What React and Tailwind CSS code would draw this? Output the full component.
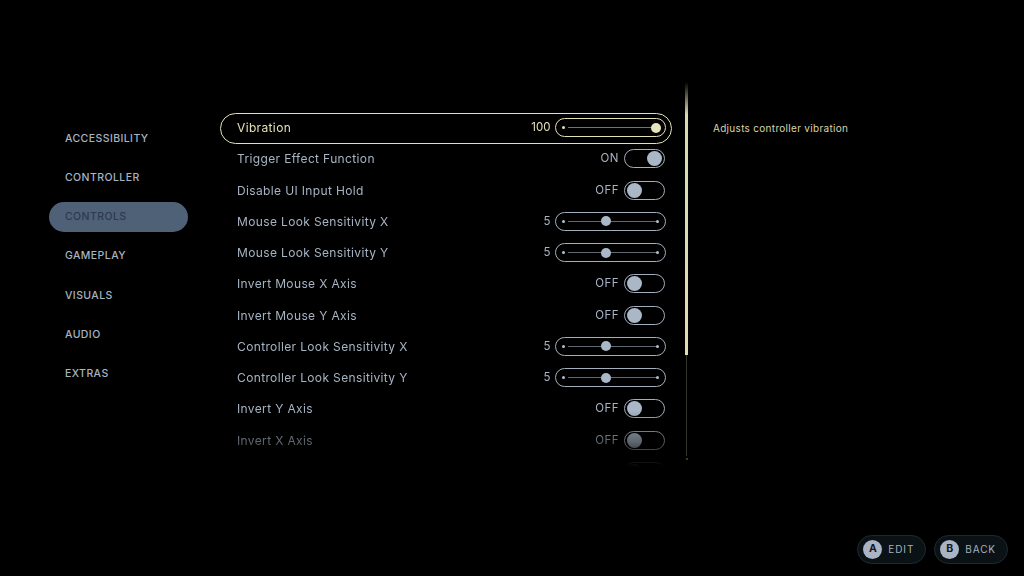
import React from 'react'

const TABS = ['ACCESSIBILITY', 'CONTROLLER', 'CONTROLS', 'GAMEPLAY', 'VISUALS', 'AUDIO', 'EXTRAS']

const ROWS = [
  { label: 'Vibration', type: 'slider', value: 100, active: true },
  { label: 'Trigger Effect Function', type: 'toggle', on: true },
  { label: 'Disable UI Input Hold', type: 'toggle', on: false },
  { label: 'Mouse Look Sensitivity X', type: 'slider', value: 5 },
  { label: 'Mouse Look Sensitivity Y', type: 'slider', value: 5 },
  { label: 'Invert Mouse X Axis', type: 'toggle', on: false },
  { label: 'Invert Mouse Y Axis', type: 'toggle', on: false },
  { label: 'Controller Look Sensitivity X', type: 'slider', value: 5 },
  { label: 'Controller Look Sensitivity Y', type: 'slider', value: 5 },
  { label: 'Invert Y Axis', type: 'toggle', on: false },
  { label: 'Invert X Axis', type: 'toggle', on: false },
  // only the top of this toggle shows through the fade
  { label: '', type: 'toggle', on: false },
]

function Slider({ value, active }) {
  // 5 sits in the middle of the track, 100 at the far end
  const left = value === 100 ? 95 : 45
  return (
    <div className="mb-[1px] flex items-center gap-[4px]">
      <span className={`text-[11.5px] ${active ? 'text-[#e4e0b6]' : 'text-[#a7b4c3]'}`}>{value}</span>
      <div className={`relative h-[19px] w-[111px] rounded-full border ${active ? 'border-[#e4e0b6]' : 'border-[#a3afbd]'}`}>
        <div className={`absolute left-[12px] right-[8px] top-[8px] h-px ${active ? 'bg-[#77765f]' : 'bg-[#5f6873]'}`} />
        <div className={`absolute left-[6px] top-[7px] h-[3px] w-[3px] rounded-full ${active ? 'bg-[#e4e0b6]' : 'bg-[#b4bfcc]'}`} />
        <div className={`absolute right-[6px] top-[7px] h-[3px] w-[3px] rounded-full ${active ? 'bg-[#e4e0b6]' : 'bg-[#b4bfcc]'}`} />
        <div
          className={`absolute top-[3.5px] h-[10px] w-[10px] rounded-full ${active ? 'bg-[#e8e4bb]' : 'bg-[#a9b7c7]'}`}
          style={{ left: `${left}px` }}
        />
      </div>
    </div>
  )
}

function Toggle({ on, showState }) {
  return (
    <div className="mb-[1px] mr-[0.5px] flex items-center gap-[5px]">
      {showState && <span className="text-[11.5px] tracking-[0.04em] text-[#a7b4c3]">{on ? 'ON' : 'OFF'}</span>}
      <div className={`flex h-[19px] w-[41px] items-center rounded-full border border-[#a3afbd] px-[2px] ${on ? 'justify-end' : 'justify-start'}`}>
        <div className="h-[15px] w-[15px] rounded-full bg-[#a9b7c7]" />
      </div>
    </div>
  )
}

function SettingRow({ row }) {
  return (
    <div
      className={`flex h-[31.25px] shrink-0 items-center justify-between rounded-full border pl-[16px] pr-[5.5px] ${
        row.active ? 'border-[#e4e0b6]' : 'border-transparent'
      }`}
    >
      <span className={`text-[12px] tracking-[0.03em] ${row.active ? 'text-[#e4e0b6]' : 'text-[#a7b4c3]'}`}>{row.label}</span>
      {row.type === 'slider' ? <Slider value={row.value} active={row.active} /> : <Toggle on={row.on} showState={row.label !== ''} />}
    </div>
  )
}

function Hint({ button, label }) {
  return (
    <div className="flex h-[29px] items-center gap-[6px] rounded-full border border-[#1d2931] bg-[#0b1216] pl-[5.5px] pr-[10.5px]">
      <div className="flex h-[19px] w-[19px] items-center justify-center rounded-full bg-[#a9b4c4] text-[10.5px] font-bold text-[#10161c]">
        {button}
      </div>
      <span className="text-[10px] tracking-[0.09em] text-[#a7b0bc]">{label}</span>
    </div>
  )
}

export default function App() {
  return (
    <div className="flex h-[576px] w-[1024px] flex-col overflow-hidden bg-black font-['Inter',sans-serif]">
      <div className="flex h-[534.5px] shrink-0">
        {/* Tabs */}
        <div className="ml-[48.5px] mt-[123.5px] flex w-[139.5px] flex-col gap-[9.25px]">
          {TABS.map((tab) => (
            <div
              key={tab}
              className={`flex h-[30px] items-center rounded-full pl-[16.5px] text-[10.5px] font-medium tracking-[0.04em] ${
                tab === 'CONTROLS' ? 'bg-[#4f6177] text-[#2b3a4e]' : 'text-[#a7b4c3]'
              }`}
            >
              {tab}
            </div>
          ))}
        </div>

        {/* Settings list */}
        <div className="ml-[32px] mt-[112.5px] flex h-[354px] w-[452px] flex-col overflow-hidden [mask-image:linear-gradient(to_bottom,black_84%,rgba(0,0,0,0.55)_93%,transparent_100%)]">
          {ROWS.map((row, i) => (
            <SettingRow key={i} row={row} />
          ))}
        </div>

        {/* Scrollbar */}
        <div className="ml-[13px] mt-[82px] flex h-[378px] w-[3px] flex-col items-center">
          <div className="h-[273px] w-[3px] bg-gradient-to-b from-transparent via-[#dcd9b0] via-[12%] to-[#e0ddb4]" />
          <div className="h-[101px] w-px bg-[#35342a]" />
          <div className="mt-[2px] h-[2px] w-[2px] rounded-full bg-[#4e4d3c]" />
        </div>

        {/* Description */}
        <div className="ml-[25px] mt-[121px] text-[10px] tracking-[0.03em] text-[#d9d5ab]">Adjusts controller vibration</div>
      </div>

      {/* Footer hints */}
      <div className="flex justify-end gap-[8px] pr-[16.5px]">
        <Hint button="A" label="EDIT" />
        <Hint button="B" label="BACK" />
      </div>
    </div>
  )
}
